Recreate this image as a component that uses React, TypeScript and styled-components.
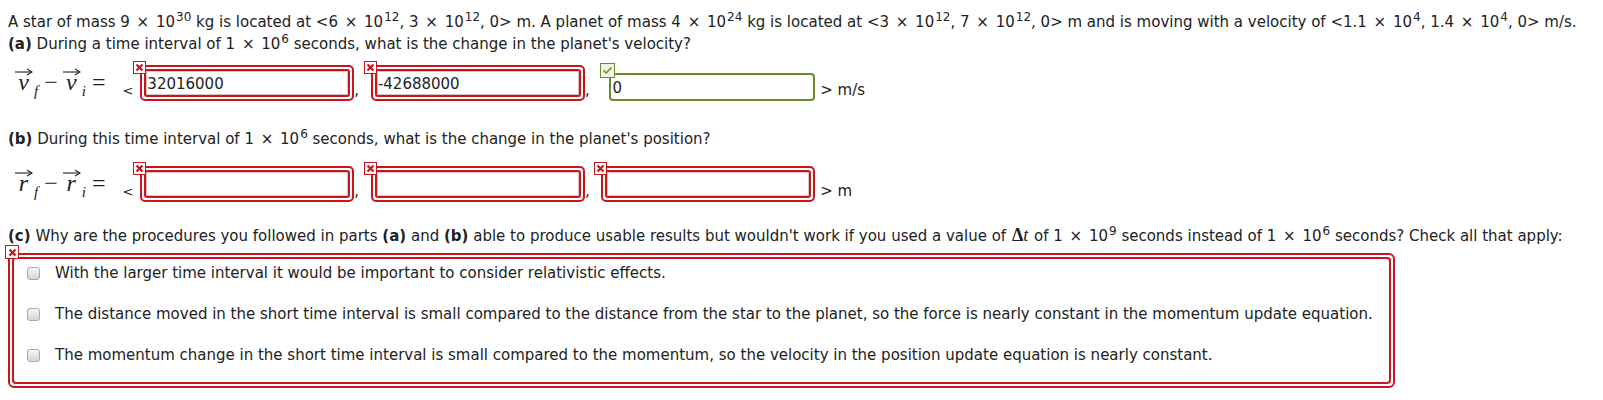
import styled, { createGlobalStyle } from 'styled-components';

const RED = '#c8161d';
const GREEN = '#6a8d2a';

const GlobalStyle = createGlobalStyle`
  body {
    margin: 0;
    background: #ffffff;
  }
`;

const Page = styled.div`
  padding: 11px 8px 0 8px;
  font-family: "DejaVu Sans", Verdana, sans-serif;
  font-size: 15px;
  line-height: 22px;
  color: #222222;
`;

const Line = styled.p<{ $top?: number }>`
  margin: ${(p) => p.$top ?? 0}px 0 0 0;
  white-space: nowrap;
`;

const Sup = styled.sup`
  font-size: 12px;
  line-height: 0;
  vertical-align: 6px;
  margin-left: 1px;
`;

const Times = styled.span`
  margin: 0 2px;
`;

const Label = styled.b`
  font-weight: bold;
`;

const Delta = styled.span`
  font-family: "Liberation Serif", serif;
  font-size: 18px;
  font-weight: bold;
  margin-left: 1px;
`;

const TItalic = styled.i`
  font-family: "Liberation Serif", serif;
  font-size: 18px;
  margin-right: 1px;
`;

const AnswerRow = styled.div<{ $top: number }>`
  display: flex;
  align-items: flex-end;
  margin-top: ${(p) => p.$top}px;
  white-space: pre;
`;

const Expr = styled.span`
  display: inline-flex;
  align-items: flex-end;
  align-self: center;
  margin: 0 13px 0 6px;
  font-family: "Liberation Serif", serif;
  font-size: 24px;
  line-height: 1;
`;

const Vec = styled.span`
  display: inline-flex;
  flex-direction: column;
  align-items: center;
  font-style: italic;

  svg {
    margin-bottom: -6px;
  }
`;

const Sub = styled.span`
  font-style: italic;
  font-size: 15px;
  margin: 0 2px -5px 1px;
`;

const Op = styled.span`
  margin: 0 4px;
`;

const Punct = styled.span<{ $small?: boolean }>`
  line-height: 1;
  margin-bottom: ${(p) => (p.$small ? 4 : 3)}px;
  font-size: ${(p) => (p.$small ? 13 : 15)}px;
`;

const Field = styled.span<{ $ok?: boolean }>`
  position: relative;
  display: inline-block;
  padding: ${(p) => (p.$ok ? '10px 0 0 15px' : '4px 0 0 7px')};
`;

const Badge = styled.span<{ $ok?: boolean }>`
  position: absolute;
  left: ${(p) => (p.$ok ? 6 : 0)}px;
  top: 0;
  width: ${(p) => (p.$ok ? 15 : 13)}px;
  height: ${(p) => (p.$ok ? 15 : 13)}px;
  box-sizing: border-box;
  border: 1px solid ${(p) => (p.$ok ? GREEN : RED)};
  background: ${(p) => (p.$ok ? '#eef5e2' : '#ffffff')};
  display: flex;
  align-items: center;
  justify-content: center;
`;

const Ring = styled.span`
  display: block;
  border: 2px solid ${RED};
  border-radius: 5px;
  padding: 2px;
`;

const Input = styled.input<{ $ok?: boolean }>`
  display: block;
  box-sizing: border-box;
  width: 206px;
  height: 28px;
  margin: 0;
  padding: 1px 1px 0 1px;
  border: 2px solid ${(p) => (p.$ok ? GREEN : RED)};
  border-radius: ${(p) => (p.$ok ? 4 : 3)}px;
  box-shadow: ${(p) => (p.$ok ? 'none' : 'inset 0 0 0 1px #dcc4c4')};
  background: #ffffff;
  font-family: inherit;
  font-size: 15px;
  color: #222222;
  outline: none;
`;

const Group = styled.div`
  position: relative;
  display: inline-block;
  margin-top: 6px;
`;

const GroupBadge = styled(Badge)`
  left: -3px;
  top: -8px;
  width: 14px;
  height: 14px;
`;

const GroupRing = styled.div`
  border: 2px solid ${RED};
  border-radius: 6px;
  padding: 2px;
`;

const GroupInner = styled.div`
  display: flex;
  flex-direction: column;
  gap: 19px;
  border: 2px solid ${RED};
  border-radius: 4px;
  padding: 3px 16px 16px 13px;
`;

const Option = styled.label`
  display: flex;
  align-items: center;
  gap: 15px;
  white-space: nowrap;
`;

const Check = styled.input`
  appearance: none;
  margin: 0;
  width: 13px;
  height: 13px;
  border: 1px solid #a9a9a9;
  border-radius: 3px;
  background: linear-gradient(#f6f6f6, #d6d6d6);
`;

function Arrow() {
  return (
    <svg width="19" height="8" viewBox="0 0 19 8">
      <path d="M1 4H17.5" stroke="#222" strokeWidth="1.1" fill="none" />
      <path d="M13 1L18 4L13 7" stroke="#222" strokeWidth="1.1" fill="none" />
    </svg>
  );
}

function Cross() {
  return (
    <svg width="9" height="9" viewBox="0 0 9 9">
      <path d="M1.5 1.5L7.5 7.5M7.5 1.5L1.5 7.5" stroke={RED} strokeWidth="2.2" />
    </svg>
  );
}

function Tick() {
  return (
    <svg width="11" height="9" viewBox="0 0 11 9">
      <path d="M1.5 4.5L4.2 7L9.5 1.5" stroke={GREEN} strokeWidth="1.6" fill="none" />
    </svg>
  );
}

function Answer({ value, ok }: { value: string; ok?: boolean }) {
  const input = <Input $ok={ok} defaultValue={value} readOnly />;
  return (
    <Field $ok={ok}>
      <Badge $ok={ok}>{ok ? <Tick /> : <Cross />}</Badge>
      {ok ? input : <Ring>{input}</Ring>}
    </Field>
  );
}

function Difference({ letter }: { letter: string }) {
  return (
    <Expr>
      <Vec>
        <Arrow />
        {letter}
      </Vec>
      <Sub>f</Sub>
      <Op>−</Op>
      <Vec>
        <Arrow />
        {letter}
      </Vec>
      <Sub>i</Sub>
      <Op>=</Op>
    </Expr>
  );
}

const X = () => <Times>×</Times>;

const options = [
  'With the larger time interval it would be important to consider relativistic effects.',
  'The distance moved in the short time interval is small compared to the distance from the star to the planet, so the force is nearly constant in the momentum update equation.',
  'The momentum change in the short time interval is small compared to the momentum, so the velocity in the position update equation is nearly constant.',
];

export default function App() {
  return (
    <>
      <GlobalStyle />
      <Page>
        <Line>
          A star of mass 9 <X /> 10<Sup>30</Sup> kg is located at &lt;6 <X /> 10<Sup>12</Sup>, 3{' '}
          <X /> 10<Sup>12</Sup>, 0&gt; m. A planet of mass 4 <X /> 10<Sup>24</Sup> kg is located at
          &lt;3 <X /> 10<Sup>12</Sup>, 7 <X /> 10<Sup>12</Sup>, 0&gt; m and is moving with a velocity
          of &lt;1.1 <X /> 10<Sup>4</Sup>, 1.4 <X /> 10<Sup>4</Sup>, 0&gt; m/s.
        </Line>
        <Line>
          <Label>(a)</Label> During a time interval of 1 <X /> 10<Sup>6</Sup> seconds, what is the
          change in the planet's velocity?
        </Line>
        <AnswerRow $top={6}>
          <Difference letter="v" />
          <Punct $small>{'<'}</Punct>
          <Answer value="32016000" />
          <Punct>{', '}</Punct>
          <Answer value="-42688000" />
          <Punct>{', '}</Punct>
          <Answer value="0" ok />
          <Punct>{' > m/s'}</Punct>
        </AnswerRow>

        <Line $top={27}>
          <Label>(b)</Label> During this time interval of 1 <X /> 10<Sup>6</Sup> seconds, what is the
          change in the planet's position?
        </Line>
        <AnswerRow $top={12}>
          <Difference letter="r" />
          <Punct $small>{'<'}</Punct>
          <Answer value="" />
          <Punct>{', '}</Punct>
          <Answer value="" />
          <Punct>{', '}</Punct>
          <Answer value="" />
          <Punct>{' > m'}</Punct>
        </AnswerRow>

        <Line $top={22}>
          <Label>(c)</Label> Why are the procedures you followed in parts <Label>(a)</Label> and{' '}
          <Label>(b)</Label> able to produce usable results but wouldn't work if you used a value of{' '}
          <Delta>Δ</Delta>
          <TItalic>t</TItalic> of 1 <X /> 10<Sup>9</Sup> seconds instead of 1 <X /> 10<Sup>6</Sup>{' '}
          seconds? Check all that apply:
        </Line>
        <Group>
          <GroupBadge>
            <Cross />
          </GroupBadge>
          <GroupRing>
            <GroupInner>
              {options.map((text) => (
                <Option key={text}>
                  <Check type="checkbox" />
                  {text}
                </Option>
              ))}
            </GroupInner>
          </GroupRing>
        </Group>
      </Page>
    </>
  );
}
